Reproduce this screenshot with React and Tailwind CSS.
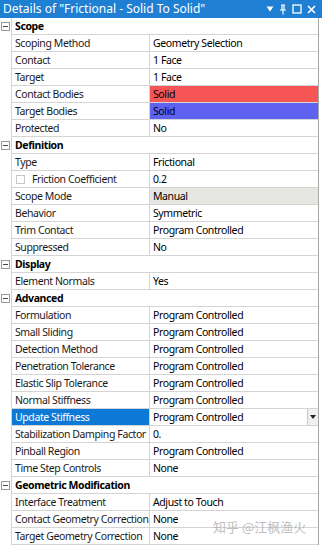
import React from "react";

const groups = [
  {
    name: "Scope",
    rows: [
      ["Scoping Method", "Geometry Selection"],
      ["Contact", "1 Face"],
      ["Target", "1 Face"],
      ["Contact Bodies", "Solid", "red"],
      ["Target Bodies", "Solid", "blue"],
      ["Protected", "No"],
    ],
  },
  {
    name: "Definition",
    rows: [
      ["Type", "Frictional"],
      ["Friction Coefficient", "0.2", "check"],
      ["Scope Mode", "Manual", "gray"],
      ["Behavior", "Symmetric"],
      ["Trim Contact", "Program Controlled"],
      ["Suppressed", "No"],
    ],
  },
  { name: "Display", rows: [["Element Normals", "Yes"]] },
  {
    name: "Advanced",
    rows: [
      ["Formulation", "Program Controlled"],
      ["Small Sliding", "Program Controlled"],
      ["Detection Method", "Program Controlled"],
      ["Penetration Tolerance", "Program Controlled"],
      ["Elastic Slip Tolerance", "Program Controlled"],
      ["Normal Stiffness", "Program Controlled"],
      ["Update Stiffness", "Program Controlled", "sel"],
      ["Stabilization Damping Factor", "0."],
      ["Pinball Region", "Program Controlled"],
      ["Time Step Controls", "None"],
    ],
  },
  {
    name: "Geometric Modification",
    rows: [
      ["Interface Treatment", "Adjust to Touch"],
      ["Contact Geometry Correction", "None"],
      ["Target Geometry Correction", "None"],
    ],
  },
];

function MinusBox() {
  return (
    <div className="w-[9px] h-[9px] border border-[#9a9a9a] bg-white flex items-center justify-center">
      <div className="w-[5px] h-px bg-[#444]" />
    </div>
  );
}

function GroupRow({ name }) {
  return (
    <div className="flex h-[17px]">
      <div className="w-[11px] flex items-center justify-center shrink-0">
        <MinusBox />
      </div>
      <div className="flex-1 border-l border-b border-[#d4d4d4] pl-[3px] flex items-center font-bold text-black leading-none">
        {name}
      </div>
    </div>
  );
}

function DataRow({ label, value, kind }) {
  let valueCls = "bg-white text-black";
  if (kind === "red") valueCls = "bg-[#f65556] text-black";
  if (kind === "blue") valueCls = "bg-[#5f62ee] text-black";
  if (kind === "gray") valueCls = "bg-[#e6e6e2] text-black";
  const labelCls = kind === "sel" ? "bg-[#0c79d6] text-white" : "bg-white text-[#1a1a1a]";
  return (
    <div className="flex h-[17px]">
      <div className="w-[11px] shrink-0" />
      <div className={`w-[139px] shrink-0 border-l border-b border-r border-[#d4d4d4] flex items-center pl-[3px] leading-none whitespace-nowrap overflow-hidden ${labelCls}`}>
        {kind === "check" && (
          <div className="w-[9px] h-[9px] border border-[#c8c8c8] bg-white mr-[7px] ml-px" />
        )}
        {label}
      </div>
      <div className={`flex-1 border-b border-[#d4d4d4] flex items-center pl-[3px] leading-none whitespace-nowrap relative ${valueCls}`}>
        {value}
        {kind === "sel" && (
          <div className="absolute right-0 top-0 bottom-0 w-[11px] bg-[#f0f0f0] border-l border-[#c8c8c8] flex items-center justify-center">
            <svg width="6" height="4" viewBox="0 0 6 4">
              <path d="M0 0 H6 L3 4 Z" fill="#222" />
            </svg>
          </div>
        )}
      </div>
    </div>
  );
}

export default function App() {
  return (
    <div
      className="w-[322px] h-[547px] bg-white relative overflow-hidden text-[10.5px] tracking-[-0.4px]"
      style={{ fontFamily: '"Noto Sans", "Open Sans", sans-serif' }}
    >
      <div className="h-[18px] bg-[#1e7fd3] flex items-center pl-[3px] pr-[6px] text-white leading-none text-[12px] tracking-normal">
        <span className="flex-1 whitespace-nowrap">Details of "Frictional - Solid To Solid"</span>
        <div className="flex items-center gap-[5px]">
          <svg width="8" height="6" viewBox="0 0 8 6">
            <path d="M0.5 0.5 H7.5 L4 5.5 Z" fill="white" />
          </svg>
          <svg width="8" height="11" viewBox="0 0 8 11">
            <path d="M2 1 H6 M3 1 V6 M5 1 V6 M1 6 H7 M4 6 V10.5" stroke="white" strokeWidth="1.2" fill="none" />
          </svg>
          <svg width="10" height="10" viewBox="0 0 10 10">
            <rect x="1" y="1" width="8" height="8" stroke="white" strokeWidth="1.3" fill="none" />
          </svg>
          <svg width="9" height="9" viewBox="0 0 9 9">
            <path d="M1 1 L8 8 M8 1 L1 8" stroke="white" strokeWidth="1.6" />
          </svg>
        </div>
      </div>
      <div className="w-[319px] border-r border-[#a8a8a8]">
        {groups.map((g) => (
          <React.Fragment key={g.name}>
            <GroupRow name={g.name} />
            {g.rows.map((r) => (
              <DataRow key={r[0]} label={r[0]} value={r[1]} kind={r[2]} />
            ))}
          </React.Fragment>
        ))}
      </div>
      <div
        className="absolute left-[213px] top-[520px] text-[13px] leading-none tracking-normal text-[#b0b0b0] opacity-80 whitespace-nowrap"
        style={{ fontFamily: '"Noto Sans CJK SC", sans-serif' }}
      >
        知乎 @江枫渔火
      </div>
    </div>
  );
}
